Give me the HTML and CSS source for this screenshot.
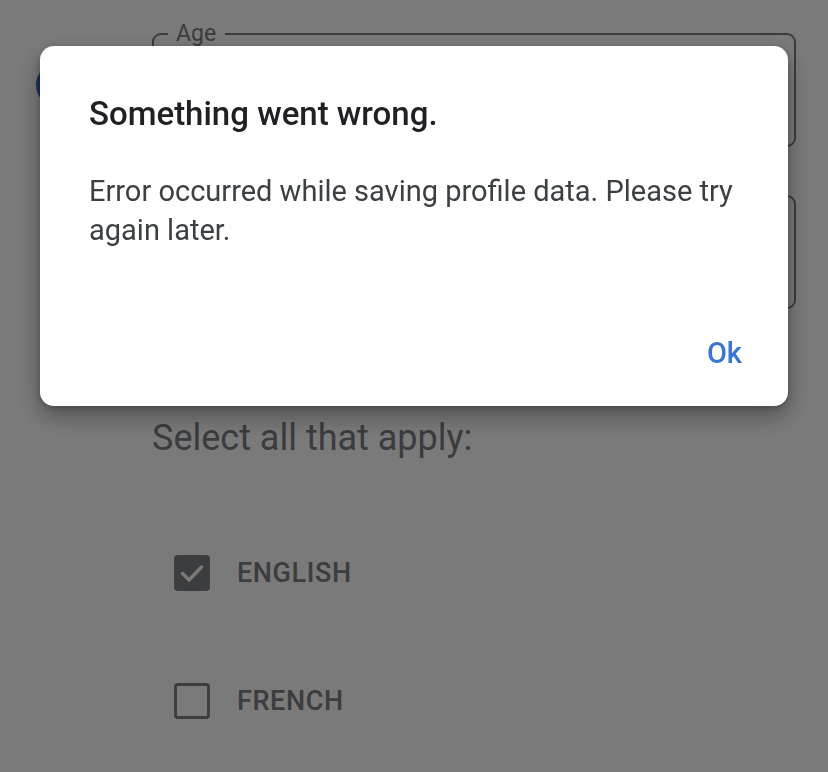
FILE: index.html
```html
<!DOCTYPE html>
<html>
<head>
<meta charset="utf-8">
<link rel="stylesheet" href="styles.css">
</head>
<body>
<div class="page">
  <div class="side">
    <div class="avatar"></div>
  </div>
  <div class="form">
    <fieldset class="field field-age">
      <legend>Age</legend>
    </fieldset>
    <fieldset class="field field-second"></fieldset>
    <div class="prompt">Select all that apply:</div>
    <div class="options">
      <label class="option">
        <span class="box checked">
          <svg viewBox="0 0 36 36" width="36" height="36"><path d="M8.5 18.5l6.5 6.5 12.5-13" fill="none" stroke="#fff" stroke-width="3.4" stroke-linecap="round" stroke-linejoin="round"/></svg>
        </span>
        <span class="opt-label">ENGLISH</span>
      </label>
      <label class="option">
        <span class="box"></span>
        <span class="opt-label">FRENCH</span>
      </label>
    </div>
  </div>
</div>
<div class="scrim"></div>
<div class="dialog-wrap">
  <div class="dialog">
    <h2 class="dialog-title">Something went wrong.</h2>
    <p class="dialog-body">Error occurred while saving profile data. Please try again later.</p>
    <div class="dialog-actions">
      <button class="btn-ok">Ok</button>
    </div>
  </div>
</div>
</body>
</html>
```
FILE: styles.css
```css
html, body {
  margin: 0;
  padding: 0;
  background: #ffffff;
  width: 828px;
  height: 772px;
  overflow: hidden;
  font-family: Roboto, "Liberation Sans", sans-serif;
}

.page {
  display: flex;
  height: 772px;
}

.side {
  width: 152px;
  flex-shrink: 0;
  padding-top: 63px;
  padding-left: 36px;
  box-sizing: border-box;
}

.avatar {
  width: 44px;
  height: 44px;
  border-radius: 50%;
  background: #3a68c8;
}

.form {
  width: 644px;
  padding-top: 24px;
}

.field {
  margin: 0;
  border: 2px solid #7b7d82;
  border-radius: 9px;
  padding: 0 0 0 14px;
  box-sizing: border-box;
  width: 644px;
}

.field legend {
  padding: 0 9px 0 8px;
  font-size: 23px;
  color: #7b7d82;
  line-height: 20px;
}

.field-age {
  height: 123px;
}

.field-second {
  margin-top: 48px;
  height: 114px;
}

.prompt {
  margin-top: 109px;
  font-size: 36px;
  color: #7b7d83;
  line-height: 40px;
}

.options {
  display: flex;
  flex-direction: column;
  gap: 92px;
  margin-top: 97px;
  padding-left: 22px;
}

.option {
  display: flex;
  align-items: center;
  gap: 27px;
}

.box {
  width: 36px;
  height: 36px;
  border: 3.5px solid #7d7f85;
  border-radius: 4px;
  box-sizing: border-box;
  display: flex;
  align-items: center;
  justify-content: center;
  flex-shrink: 0;
}

.box.checked {
  background: #7d7f85;
  border: none;
}

.opt-label {
  font-size: 27px;
  color: #7d7f85;
  letter-spacing: 0.6px;
  font-weight: 500;
}

.scrim {
  position: fixed;
  inset: 0;
  background: rgba(0, 0, 0, 0.52);
}

.dialog-wrap {
  position: fixed;
  inset: 0;
  display: flex;
  justify-content: center;
  align-items: flex-start;
  padding-top: 46px;
}

.dialog {
  width: 748px;
  height: 360px;
  box-sizing: border-box;
  background: #ffffff;
  border-radius: 14px;
  box-shadow: 0 10px 24px rgba(0, 0, 0, 0.35), 0 2px 6px rgba(0, 0, 0, 0.2);
  padding: 49px 49px 0 49px;
  display: flex;
  flex-direction: column;
}

.dialog-title {
  margin: 0;
  font-size: 33px;
  font-weight: 500;
  color: #202124;
  line-height: 38px;
}

.dialog-body {
  margin: 39px 0 0 0;
  font-size: 29px;
  line-height: 39px;
  color: #3c4043;
}

.dialog-actions {
  margin-top: auto;
  display: flex;
  justify-content: flex-end;
  padding-bottom: 33px;
}

.btn-ok {
  border: none;
  background: none;
  padding: 0;
  margin-right: -3px;
  font-family: inherit;
  font-size: 29px;
  font-weight: 500;
  color: #3a75d6;
  line-height: 40px;
}
```
